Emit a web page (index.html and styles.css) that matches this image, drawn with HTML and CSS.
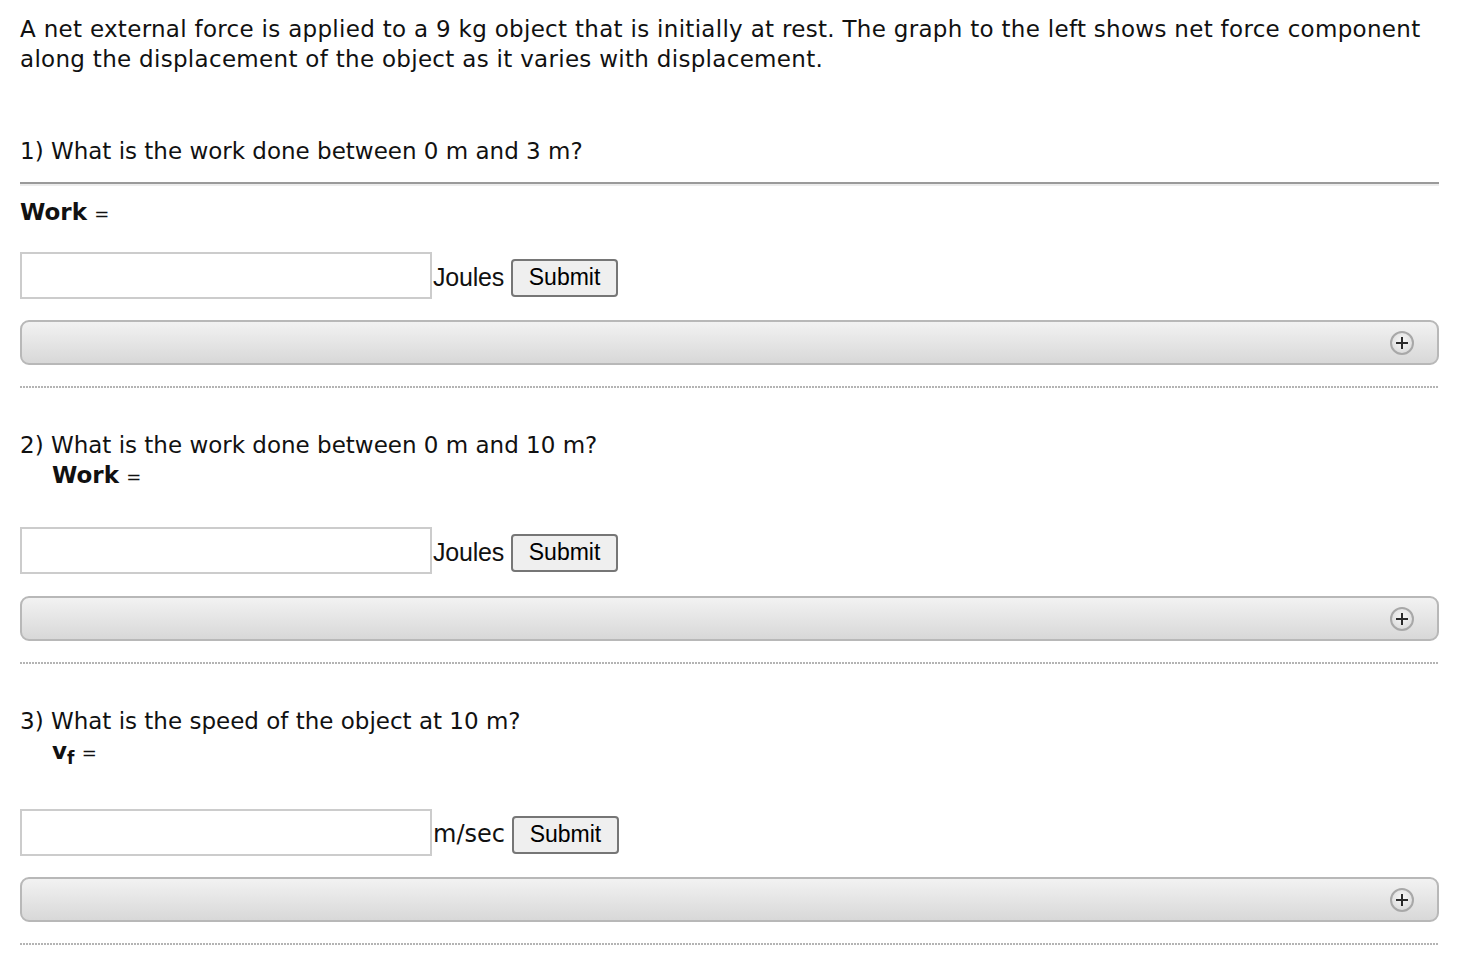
FILE: index.html
```html
<!DOCTYPE html>
<html>
<head>
<meta charset="utf-8">
<link rel="stylesheet" href="styles.css">
</head>
<body>
<div class="page">
  <p class="intro">A net external force is applied to a 9 kg object that is initially at rest. The graph to the left shows net force component along the displacement of the object as it varies with displacement.</p>

  <section class="q q1">
    <div class="q-title">1) What is the work done between 0 m and 3 m?</div>
    <hr class="rule">
    <div class="prompt"><b>Work</b> <span class="eq">=</span></div>
    <div class="answer-row">
      <input class="answer" type="text">
      <span class="unit">Joules</span>
      <button class="submit">Submit</button>
    </div>
    <div class="hint-bar"><span class="plus"></span></div>
    <div class="dots"></div>
  </section>

  <section class="q q2">
    <div class="q-title">2) What is the work done between 0 m and 10 m?</div>
    <div class="prompt indent"><b>Work</b> <span class="eq">=</span></div>
    <div class="answer-row">
      <input class="answer" type="text">
      <span class="unit">Joules</span>
      <button class="submit">Submit</button>
    </div>
    <div class="hint-bar"><span class="plus"></span></div>
    <div class="dots"></div>
  </section>

  <section class="q q3">
    <div class="q-title">3) What is the speed of the object at 10 m?</div>
    <div class="prompt indent"><b>v<sub>f</sub></b> <span class="eq">=</span></div>
    <div class="answer-row">
      <input class="answer" type="text">
      <span class="unit unit-main">m/sec</span>
      <button class="submit">Submit</button>
    </div>
    <div class="hint-bar"><span class="plus"></span></div>
    <div class="dots"></div>
  </section>
</div>
</body>
</html>
```

FILE: styles.css
```css
html, body {
  margin: 0;
  padding: 0;
  background: #fff;
}

body {
  font-family: "DejaVu Sans", sans-serif;
  font-size: 23px;
  line-height: 30px;
  color: #111;
}

.page {
  padding: 14px 41px 0 20px;
}

.intro {
  margin: 0;
  letter-spacing: 0.3px;
}

.q-title {
  height: 30px;
  line-height: 30px;
}

.q1 { margin-top: 62px; }
.q2 { margin-top: 42px; }
.q3 { margin-top: 42px; }

.rule {
  margin: 16px 0 11px;
  height: 0;
  border: 0;
  border-top: 2px solid #9a9a9a;
  border-bottom: 2px solid #ececec;
}

.prompt {
  height: 30px;
  line-height: 30px;
}

.prompt b {
  font-weight: bold;
}

.eq {
  font-size: 18px;
  line-height: 0;
}

.prompt sub {
  font-size: 17px;
  line-height: 0;
  vertical-align: -5px;
}

.indent {
  padding-left: 32px;
}

.answer-row {
  display: flex;
  align-items: center;
  margin-top: 25px;
}

.q2 .answer-row { margin-top: 37px; }
.q3 .answer-row { margin-top: 43px; }

.answer {
  box-sizing: border-box;
  width: 412px;
  height: 47px;
  margin: 0;
  border: 2px solid #cccccc;
  background: #fff;
  outline: none;
}

.unit {
  font-family: "Liberation Sans", Arial, sans-serif;
  font-size: 25px;
  letter-spacing: -0.2px;
  margin-left: 1px;
  margin-top: 2px;
}

.unit-main {
  font-family: "DejaVu Sans", sans-serif;
  font-size: 24px;
  letter-spacing: 0;
}

.submit {
  box-sizing: border-box;
  width: 107px;
  height: 38px;
  margin: 4px 0 0 7px;
  padding: 0;
  font-family: "Liberation Sans", Arial, sans-serif;
  font-size: 23px;
  color: #000;
  background: #efefef;
  border: 2px solid #767676;
  border-radius: 4px;
}

.hint-bar {
  box-sizing: border-box;
  height: 45px;
  margin-top: 21px;
  border: 2px solid #b8b8b8;
  border-radius: 9px;
  background: linear-gradient(#f2f2f2, #d8d8d8);
  display: flex;
  align-items: center;
  justify-content: flex-end;
  padding-right: 23px;
}

.q2 .hint-bar { margin-top: 22px; }

.plus {
  position: relative;
  width: 24px;
  height: 24px;
  border-radius: 50%;
  box-sizing: border-box;
  border: 2px solid #a8a8a8;
  background: radial-gradient(circle at 50% 40%, #f8f8f8, #d4d4d4);
}

.plus::before,
.plus::after {
  content: "";
  position: absolute;
  background: #2a2a2a;
}

.plus::before {
  left: 4px;
  right: 4px;
  top: 9px;
  height: 2px;
}

.plus::after {
  top: 4px;
  bottom: 4px;
  left: 9px;
  width: 2px;
}

.dots {
  height: 2px;
  margin-top: 21px;
  background: repeating-linear-gradient(90deg, #b4b4b4 0 2px, transparent 2px 3px);
}
```
